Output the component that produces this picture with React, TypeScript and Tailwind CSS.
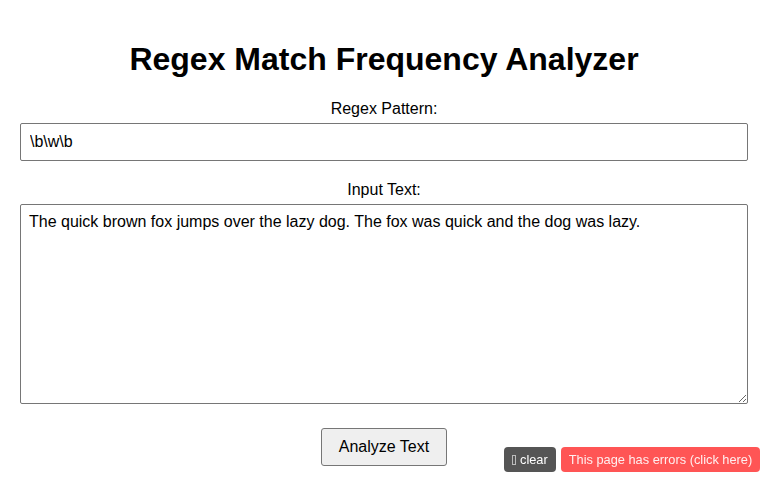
const fontStack = "font-['Liberation_Sans',Arial,sans-serif]";

export default function App() {
  return (
    <div className={`${fontStack} relative h-[480px] w-[768px] overflow-hidden bg-white text-black`}>
      <div className="flex flex-col items-center px-5 pt-[41px]">
        <h1 className="mb-[22px] text-[32px] leading-[37px] font-bold">Regex Match Frequency Analyzer</h1>

        {/* Pattern */}
        <label htmlFor="pattern" className="mb-[5px] text-base leading-[18px]">
          Regex Pattern:
        </label>
        <input
          id="pattern"
          type="text"
          defaultValue="\b\w\b"
          className="mb-5 h-[38px] w-full rounded-[2px] border border-[#767676] px-[9px] text-base outline-none"
        />

        {/* Text */}
        <label htmlFor="text" className="mb-[5px] text-base leading-[18px]">
          Input Text:
        </label>
        <textarea
          id="text"
          defaultValue="The quick brown fox jumps over the lazy dog. The fox was quick and the dog was lazy."
          className="mb-6 block h-[200px] w-full resize-y rounded-[2px] border border-[#767676] p-2 text-base leading-[normal] outline-none"
        />

        <button className="h-[38px] w-[126px] rounded-[3px] border border-[#767676] bg-[#efefef] text-base text-black">
          Analyze Text
        </button>
      </div>

      {/* Error overlay */}
      <div className="absolute right-2 bottom-2 flex gap-[5px] text-[12.8px] leading-[15px] text-white will-change-transform">
        <div className="flex h-[25px] items-center rounded-[4px] bg-[#555555] px-2">
          <span className="mr-1 inline-block h-[10px] w-[4px] border border-[#bbbbbb]" />
          clear
        </div>
        <div className="flex h-[25px] items-center rounded-[4px] bg-[#ff5555] px-2 text-white/90">This page has errors (click here)</div>
      </div>
    </div>
  );
}
